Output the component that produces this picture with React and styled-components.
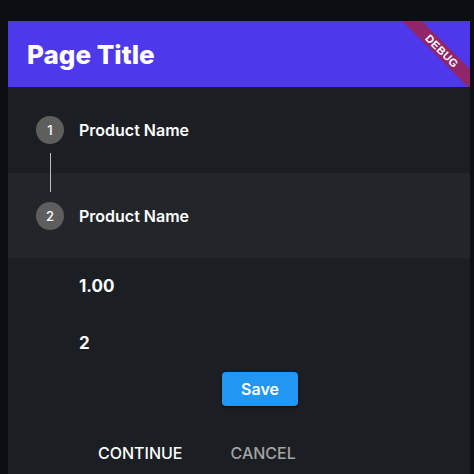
import React from "react";
import styled, { createGlobalStyle } from "styled-components";

const Global = createGlobalStyle`
  html, body { margin: 0; padding: 0; height: 100%; background: #0b0e12; overflow: hidden; }
  #root { height: 100%; }
  * { box-sizing: border-box; }
`;

const Page = styled.div`
  height: 100%;
  padding: 21px 4px 0 8px;
  display: flex;
`;

const Frame = styled.div`
  position: relative;
  flex: 1;
  background: #1b1e22;
  display: flex;
  flex-direction: column;
  font-family: Inter, "Noto Sans", sans-serif;
  color: #fff;
`;

const AppBar = styled.header`
  height: 66px;
  background: #4e38eb;
  display: flex;
  align-items: center;
  padding-left: 19px;
  flex-shrink: 0;
`;

const Title = styled.h1`
  margin: 0;
  font-size: 26px;
  font-weight: 800;
  letter-spacing: 0;
  color: #fff;
`;

const BannerCorner = styled.div`
  position: absolute;
  top: 0;
  right: 0;
  width: 80px;
  height: 66px;
  overflow: hidden;
  pointer-events: none;
`;

const Ribbon = styled.div`
  position: absolute;
  left: -8px;
  top: 23px;
  width: 120px;
  height: 14px;
  background: rgba(183, 28, 28, 0.63);
  transform: rotate(45deg);
  display: flex;
  align-items: center;
  justify-content: center;
  font-family: "Liberation Sans", Arial, sans-serif;
  font-size: 11px;
  font-weight: 700;
  letter-spacing: 0.4px;
  color: #fff;
`;

const Step = styled.div`
  height: ${(p) => p.$h}px;
  background: ${(p) => (p.$active ? "#222529" : "transparent")};
  display: flex;
  align-items: center;
  padding-left: 28px;
  gap: 15px;
`;

const Circle = styled.div`
  position: relative;
  width: 28px;
  height: 28px;
  border-radius: 50%;
  background: #5e5e5e;
  display: flex;
  align-items: center;
  justify-content: center;
  font-size: 13px;
  font-weight: 500;
  color: #fff;
  ${(p) =>
    p.$connector &&
    `&::before {
      content: "";
      position: absolute;
      left: 13.5px;
      top: -49px;
      width: 1px;
      height: 39px;
      background: #bdbdbd;
    }`}
`;

const StepLabel = styled.div`
  font-size: 16px;
  font-weight: 600;
  color: #fff;
`;

const Content = styled.div`
  display: flex;
  flex-direction: column;
  padding-left: 71px;
  padding-top: 16px;
`;

const Value = styled.div`
  height: 24px;
  line-height: 24px;
  font-size: 17px;
  font-weight: 700;
  margin-bottom: ${(p) => p.$mb || 0}px;
`;

const SaveButton = styled.button`
  align-self: flex-start;
  margin-left: 143px;
  margin-top: 17px;
  width: 76px;
  height: 34px;
  border: none;
  border-radius: 4px;
  background: #2196f3;
  color: #fff;
  font-family: Inter, "Noto Sans", sans-serif;
  font-size: 16px;
  font-weight: 600;
  box-shadow: 0 1px 3px rgba(0, 0, 0, 0.5);
`;

const Controls = styled.div`
  display: flex;
  gap: 16px;
  margin-left: 3px;
  margin-top: 29px;
`;

const TextButton = styled.button`
  height: 36px;
  padding: 0 16px;
  border: none;
  background: transparent;
  font-family: Inter, "Noto Sans", sans-serif;
  font-size: 16px;
  font-weight: 500;
  color: ${(p) => (p.$muted ? "#a3a3a3" : "#fff")};
`;

export default function App() {
  return (
    <>
      <Global />
      <Page>
        <Frame>
          <AppBar>
            <Title>Page Title</Title>
          </AppBar>
          <BannerCorner>
            <Ribbon>DEBUG</Ribbon>
          </BannerCorner>
          <Step $h={86}>
            <Circle>1</Circle>
            <StepLabel>Product Name</StepLabel>
          </Step>
          <Step $h={85} $active>
            <Circle $connector>2</Circle>
            <StepLabel>Product Name</StepLabel>
          </Step>
          <Content>
            <Value $mb={33}>1.00</Value>
            <Value>2</Value>
            <SaveButton>Save</SaveButton>
            <Controls>
              <TextButton>CONTINUE</TextButton>
              <TextButton $muted>CANCEL</TextButton>
            </Controls>
          </Content>
        </Frame>
      </Page>
    </>
  );
}
